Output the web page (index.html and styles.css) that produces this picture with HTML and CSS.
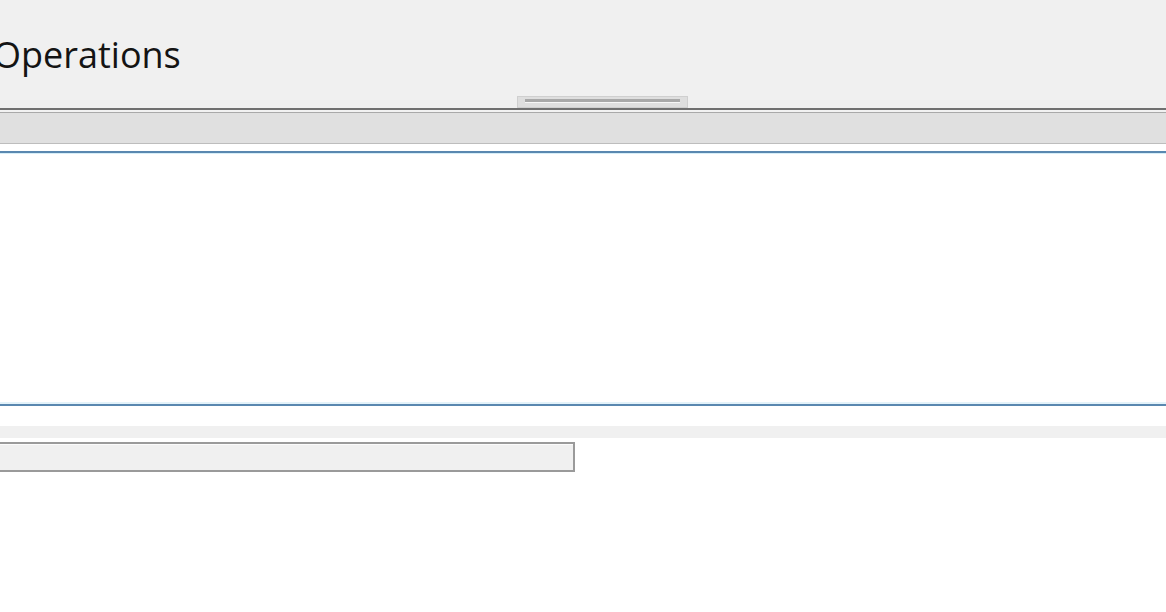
FILE: index.html
```html
<!DOCTYPE html>
<html>
<head>
<meta charset="utf-8">
<link rel="stylesheet" href="styles.css">
</head>
<body>
<div class="header">
  <h1 class="title">Operations</h1>
  <div class="grip"><div class="grip-line"></div></div>
</div>
<div class="toolbar"></div>
<div class="gap-top"></div>
<div class="panel"></div>
<div class="gap-bottom"></div>
<div class="strip"></div>
<div class="footer">
  <div class="field"></div>
</div>
</body>
</html>
```
FILE: styles.css
```css
html, body {
  margin: 0;
  padding: 0;
  background: #ffffff;
  width: 1166px;
  height: 612px;
  overflow: hidden;
  font-family: "Open Sans", "DejaVu Sans", sans-serif;
}
.header {
  height: 108px;
  background: #f0f0f0;
  position: relative;
  display: flex;
  align-items: flex-start;
}
.title {
  margin: 33px 0 0 -7px;
  font-size: 36px;
  font-weight: normal;
  color: #141414;
  line-height: 44px;
}
.grip {
  position: absolute;
  left: 517px;
  top: 96px;
  width: 169px;
  height: 10px;
  border: 1px solid #cfcfcf;
  background: #dedede;
  display: flex;
  align-items: flex-start;
  justify-content: center;
}
.grip-line {
  margin-top: 2px;
  width: 155px;
  height: 3px;
  background: #a8a8a8;
  border-bottom: 1px solid #f6f6f6;
}
.toolbar {
  height: 33px;
  background: #e0e0e0;
  border-top: 2px solid #6f6f6f;
  box-shadow: inset 0 2px 0 #f2f2f2, inset 0 3px 0 #a9a9a9, inset 0 -1px 0 #bdbdbd;
  padding-bottom: 1px;
  box-sizing: content-box;
}
.gap-top {
  height: 7px;
  background: #ffffff;
}
.panel {
  height: 251px;
  background: #ffffff;
  border-top: 2px solid #5a88b0;
  border-bottom: 2px solid #5a88b0;
  box-shadow: inset 0 1px 0 #d6eef8, inset 0 -2px 0 #e4f3fa;
}
.gap-bottom {
  height: 20px;
  background: #ffffff;
}
.strip {
  height: 12px;
  background: #f0f0f0;
}
.footer {
  padding-top: 4px;
  background: #ffffff;
}
.field {
  width: 573px;
  height: 26px;
  background: #f0f0f0;
  border: 2px solid #9a9a9a;
  border-left: none;
  box-shadow: inset 0 1px 0 #fbfbfb;
}
```
